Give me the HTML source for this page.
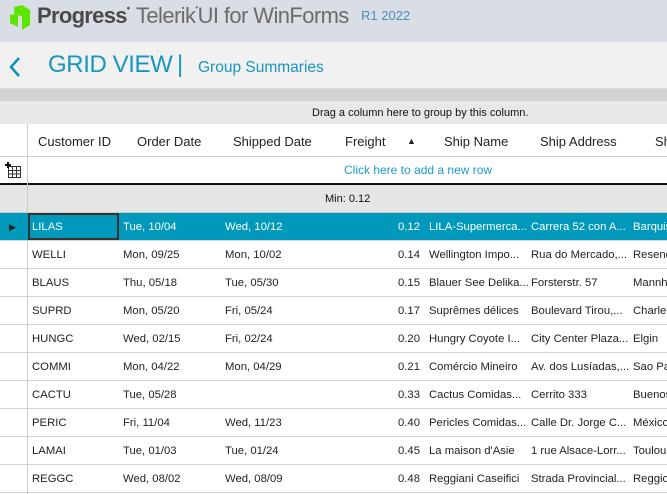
<!DOCTYPE html>
<html><head><meta charset="utf-8"><style>
*{margin:0;padding:0;box-sizing:border-box}
body{width:667px;height:494px;overflow:hidden;background:#fff;font-family:"Liberation Sans",sans-serif;position:relative}
.a{position:absolute;white-space:nowrap}
.top{left:0;top:0;width:667px;height:42px;background:#d9dee6}
.bar{left:0;top:42px;width:667px;height:47px;background:#f1f1f1;border-bottom:1px solid #ddd}
.strip{left:0;top:89px;width:667px;height:12px;background:#d3d3d3}
.gp{left:0;top:101px;width:667px;height:23px;background:#e8e8e8;font-size:11px;color:#111;line-height:24px}
.hdr{left:0;top:124px;width:667px;height:33px;background:#fff;border-bottom:1px solid #ccc;font-size:13px;color:#222;line-height:35px}
.nr{left:0;top:157px;width:667px;height:28px;background:#fff;border-bottom:2px solid #111}
.sum{left:0;top:185px;width:667px;height:28px;background:#e6e6e6;border-bottom:1px solid #ccc;font-size:11px;line-height:29px;color:#111}
.row{left:0;width:667px;height:28px;border-bottom:1px solid #d4d4d4;font-size:11.3px;line-height:29px;color:#222}
.sel{background:#0099bc;color:#fff}
.vl{left:27px;top:124px;width:1px;height:370px;background:#ccc}
</style></head><body>
<div class="a top"></div>
<svg class="a" style="left:8px;top:5px" width="26" height="26" viewBox="0 0 26 26"><path d="M6 2 L14 0 L22 5 L22 20 L14 25 L14 12 L6 8 Z" fill="#5ce500"/><path d="M2 10 L10 8 L10 22 L2 18 Z" fill="#5ce500"/></svg>
<div class="a" style="left:37px;top:3px;font-size:22px;font-weight:bold;color:#4a4a4a;letter-spacing:-0.7px">Progress<span style="font-size:9px;vertical-align:top">•</span></div>
<div class="a" style="left:136px;top:3px;font-size:22px;color:#6b6b6b;letter-spacing:-0.6px">Telerik<span style="font-size:8px;vertical-align:top">•</span>UI for WinForms</div>
<div class="a" style="left:361px;top:8px;font-size:13px;color:#4a8fb8">R1 2022</div>
<div class="a bar"></div>
<svg class="a" style="left:8px;top:56px" width="14" height="22" viewBox="0 0 14 22"><path d="M11 2 L3 11 L11 20" stroke="#0a8fbf" stroke-width="2.5" fill="none"/></svg>
<div class="a" style="left:48px;top:51px;font-size:24px;color:#1896c0;letter-spacing:-0.4px">GRID VIEW</div>
<div class="a" style="left:177px;top:51px;font-size:24px;color:#1896c0">|</div>
<div class="a" style="left:198px;top:59px;font-size:15.5px;color:#1896c0">Group Summaries</div>
<div class="a strip"></div>
<div class="a gp"><span class="a" style="left:312px">Drag a column here to group by this column.</span></div>
<div class="a hdr">
<span class="a" style="left:38px">Customer ID</span>
<span class="a" style="left:137px">Order Date</span>
<span class="a" style="left:233px">Shipped Date</span>
<span class="a" style="left:345px">Freight</span>
<span class="a" style="left:407px;font-size:9px">▲</span>
<span class="a" style="left:444px">Ship Name</span>
<span class="a" style="left:540px">Ship Address</span>
<span class="a" style="left:655px">Sh</span>
</div>
<div class="a nr"><span class="a" style="left:344px;top:6px;font-size:12px;color:#1a9ad0">Click here to add a new row</span></div>
<svg class="a" style="left:5px;top:162px" width="16" height="16" viewBox="0 0 16 16"><g fill="none" stroke="#333" stroke-width="1"><rect x="3.5" y="4.5" width="12" height="11"/><path d="M3.5 8.5H15.5M3.5 12H15.5M7.5 4.5V15.5M11.5 4.5V15.5"/></g><path d="M0 3H6M3 0V6" stroke="#111" stroke-width="2"/></svg>
<div class="a sum"><span class="a" style="left:325px">Min: 0.12</span></div>
<div class="a vl"></div>
<div id="rows"></div>
<script>
var d=[["LILAS","Tue, 10/04","Wed, 10/12","0.12","LILA-Supermerca...","Carrera 52 con A...","Barquis"],
["WELLI","Mon, 09/25","Mon, 10/02","0.14","Wellington Impo...","Rua do Mercado,...","Resend"],
["BLAUS","Thu, 05/18","Tue, 05/30","0.15","Blauer See Delika...","Forsterstr. 57","Mannh"],
["SUPRD","Mon, 05/20","Fri, 05/24","0.17","Suprêmes délices","Boulevard Tirou,...","Charler"],
["HUNGC","Wed, 02/15","Fri, 02/24","0.20","Hungry Coyote I...","City Center Plaza...","Elgin"],
["COMMI","Mon, 04/22","Mon, 04/29","0.21","Comércio Mineiro","Av. dos Lusíadas,...","Sao Pa"],
["CACTU","Tue, 05/28","","0.33","Cactus Comidas...","Cerrito 333","Buenos"],
["PERIC","Fri, 11/04","Wed, 11/23","0.40","Pericles Comidas...","Calle Dr. Jorge C...","México"],
["LAMAI","Tue, 01/03","Tue, 01/24","0.45","La maison d'Asie","1 rue Alsace-Lorr...","Toulou"],
["REGGC","Wed, 08/02","Wed, 08/09","0.48","Reggiani Caseifici","Strada Provincial...","Reggio"]];
var h="";
d.forEach(function(r,i){
var t=213+i*28;
h+='<div class="a row'+(i==0?' sel':'')+'" style="top:'+t+'px">'+
(i==0?'<span class="a" style="left:9px;font-size:9px;color:#222">▶</span><div class="a" style="left:28px;top:0;width:91px;height:27px;border:2px solid #333"></div>':'')+
'<span class="a" style="left:32px">'+r[0]+'</span><span class="a" style="left:123px">'+r[1]+'</span><span class="a" style="left:225px">'+r[2]+'</span><span class="a" style="right:247px">'+r[3]+'</span><span class="a" style="left:429px">'+r[4]+'</span><span class="a" style="left:531px">'+r[5]+'</span><span class="a" style="left:633px">'+r[6]+'</span></div>';
});
document.getElementById("rows").innerHTML=h;
</script>
<div class="a vl" style="top:241px;height:253px"></div>
</body></html>
